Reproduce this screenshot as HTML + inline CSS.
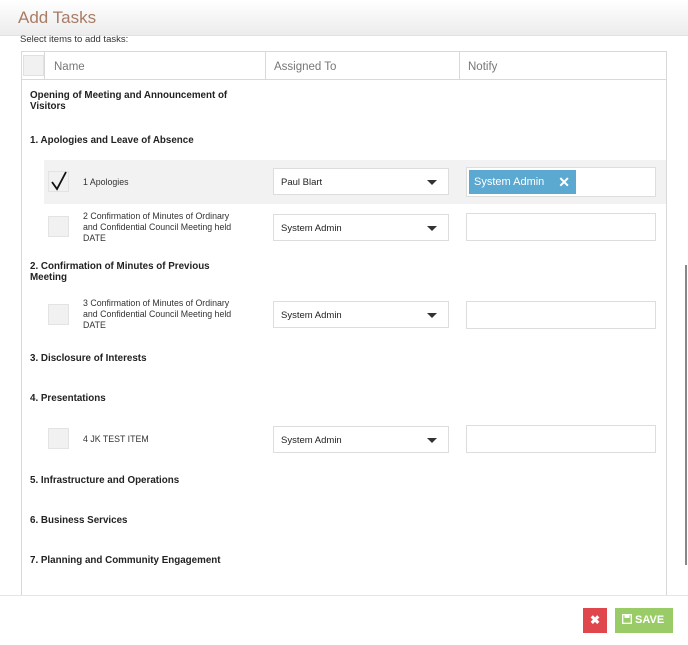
<!DOCTYPE html>
<html><head><meta charset="utf-8"><style>
*{margin:0;padding:0;box-sizing:border-box}
body{width:688px;height:645px;overflow:hidden;background:#fff;font-family:"Liberation Sans",sans-serif;position:relative;color:#222}
.a{position:absolute}
.hdr{left:0;top:0;width:688px;height:36px;background:linear-gradient(#fff,#ececec);border-bottom:1px solid #e2e2e2}
.title{left:18px;top:8px;font-size:17px;color:#a87c65}
.sub{left:20px;top:34px;font-size:9.5px;color:#333}
.tbl{left:21px;top:51px;width:646px;height:560px;border:1px solid #d9d9d9;border-bottom:none}
.th{top:52px;height:28px;border-bottom:1px solid #d9d9d9;background:#fff}
.hl{top:51px;font-size:11.5px;color:#777;line-height:33px}
.sec{left:30px;font-size:9.8px;font-weight:bold;color:#222;line-height:11px;width:200px}
.cb{left:48px;width:21px;height:21px;background:#f1f1f1;border:1px solid #e3e3e3}
.it{left:83px;font-size:8.8px;line-height:11px;width:175px;color:#333}
.sel{left:273px;width:176px;height:27px;border:1px solid #ddd;background:#fff;font-size:9.5px;line-height:27px;padding-left:7px;color:#222}
.sel:after{content:"";position:absolute;right:11px;top:11px;border-left:5px solid transparent;border-right:5px solid transparent;border-top:5px solid #333}
.nt{left:466px;width:190px;height:27px;border:1px solid #ddd;background:#fff}
</style></head><body>
<div class="a hdr"></div>
<div class="a title">Add Tasks</div>
<div class="a sub">Select items to add tasks:</div>
<div class="a tbl"></div>
<div class="a th" style="left:22px;width:644px"></div>
<div class="a" style="left:23px;top:55px;width:21px;height:21px;background:#f1f1f1;border:1px solid #e0e0e0"></div>
<div class="a" style="left:44px;top:52px;width:1px;height:28px;background:#d9d9d9"></div>
<div class="a hl" style="left:54px">Name</div>
<div class="a" style="left:265px;top:52px;width:1px;height:28px;background:#d9d9d9"></div>
<div class="a hl" style="left:274px">Assigned To</div>
<div class="a" style="left:459px;top:52px;width:1px;height:28px;background:#d9d9d9"></div>
<div class="a hl" style="left:468px">Notify</div>

<div class="a sec" style="top:90px">Opening of Meeting and Announcement of Visitors</div>
<div class="a sec" style="top:135px">1. Apologies and Leave of Absence</div>

<div class="a" style="left:44px;top:160px;width:622px;height:44px;background:#f2f2f2"></div>
<div class="a cb" style="top:171px"></div>
<svg class="a" style="left:49px;top:170px" width="20" height="22" viewBox="0 0 20 22"><path d="M3 12 L8 19 L17 2" fill="none" stroke="#111" stroke-width="1.8"/></svg>
<div class="a it" style="top:177px">1 Apologies</div>
<div class="a sel" style="top:168px">Paul Blart</div>
<div class="a nt" style="top:167px;height:30px"></div>
<div class="a" style="left:469px;top:170px;width:107px;height:24px;background:#5ba8d0;color:#fff;font-size:11px;line-height:24px;padding-left:5px">System Admin<span style="position:absolute;right:6px;top:0;font-weight:bold;font-size:14px">✕</span></div>

<div class="a cb" style="top:216px"></div>
<div class="a it" style="top:211px">2 Confirmation of Minutes of Ordinary<br>and Confidential Council Meeting held<br>DATE</div>
<div class="a sel" style="top:214px">System Admin</div>
<div class="a nt" style="top:213px;height:28px"></div>

<div class="a sec" style="top:261px">2. Confirmation of Minutes of Previous Meeting</div>
<div class="a cb" style="top:304px"></div>
<div class="a it" style="top:298px">3 Confirmation of Minutes of Ordinary<br>and Confidential Council Meeting held<br>DATE</div>
<div class="a sel" style="top:301px">System Admin</div>
<div class="a nt" style="top:301px;height:28px"></div>

<div class="a sec" style="top:353px">3. Disclosure of Interests</div>
<div class="a sec" style="top:393px">4. Presentations</div>
<div class="a cb" style="top:428px"></div>
<div class="a it" style="top:434px">4 JK TEST ITEM</div>
<div class="a sel" style="top:426px">System Admin</div>
<div class="a nt" style="top:425px;height:28px"></div>

<div class="a sec" style="top:475px">5. Infrastructure and Operations</div>
<div class="a sec" style="top:515px">6. Business Services</div>
<div class="a sec" style="top:555px">7. Planning and Community Engagement</div>

<div class="a" style="left:685px;top:265px;width:2px;height:300px;background:#888"></div>
<div class="a" style="left:0;top:595px;width:688px;height:50px;background:#fff;border-top:1px solid #e5e5e5"></div>
<div class="a" style="left:583px;top:608px;width:24px;height:25px;background:#e0474c;color:#fff;font-weight:bold;font-size:12px;text-align:center;line-height:25px">✖</div>
<div class="a" style="left:615px;top:608px;width:58px;height:25px;background:#99cc66;color:#fff;font-weight:bold;font-size:11px;line-height:25px;padding-left:7px">
<svg width="10" height="10" viewBox="0 0 10 10" style="vertical-align:-1px"><rect x="0.7" y="0.7" width="8.6" height="8.6" fill="none" stroke="#fff" stroke-width="1.3"/><rect x="2.5" y="1" width="5" height="3" fill="#fff"/></svg> SAVE</div>
</body></html>
